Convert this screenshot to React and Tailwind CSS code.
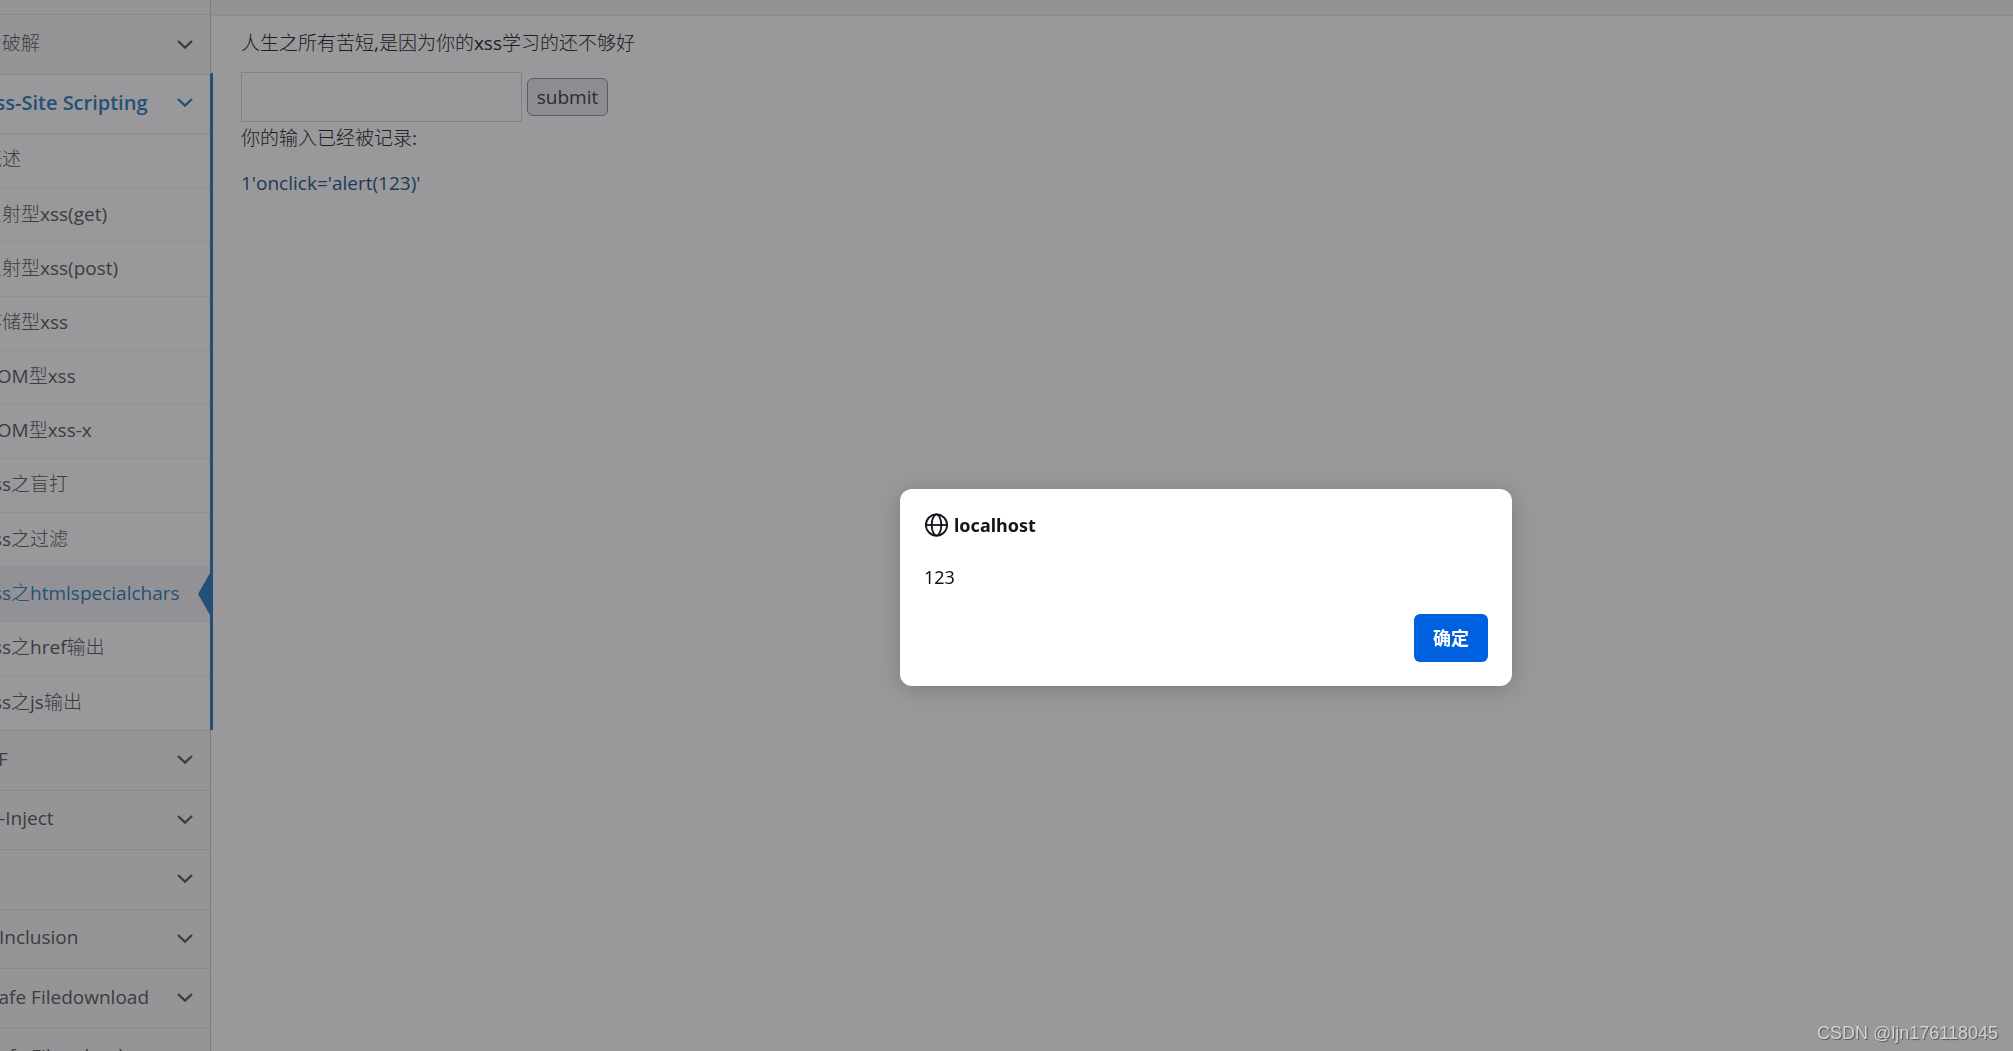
import { useState } from "react";

const xssItems = [
  "概述",
  "反射型xss(get)",
  "反射型xss(post)",
  "存储型xss",
  "DOM型xss",
  "DOM型xss-x",
  "xss之盲打",
  "xss之过滤",
  "xss之htmlspecialchars",
  "xss之href输出",
  "xss之js输出",
];

const lowerMenus = [
  "CSRF",
  "SQL-Inject",
  "RCE",
  "File Inclusion",
  "Unsafe Filedownload",
  "Unsafe Fileupload",
];

const Chevron = () => (
  <svg
    viewBox="0 0 16 10"
    className="w-4 h-[10px] shrink-0"
    fill="none"
    stroke="currentColor"
    strokeWidth="2.3"
  >
    <path d="M1 1 L8 7.6 L15 1" />
  </svg>
);

const MenuLink = ({ label }) => (
  <a
    href="#"
    className="flex h-full items-center justify-between pl-[39px] pr-[17px] text-[#585858]"
  >
    <span className="whitespace-nowrap pb-[3px]">{label}</span>
    <Chevron />
  </a>
);

const GlobeIcon = () => (
  <svg
    viewBox="0 0 24 24"
    className="w-6 h-6"
    fill="none"
    stroke="#15141a"
    strokeWidth="1.8"
  >
    <circle cx="12.5" cy="12" r="10.6" />
    <ellipse cx="12.5" cy="12" rx="4.8" ry="10.6" />
    <path d="M1.9 12 H23.1" />
  </svg>
);

const Sidebar = () => (
  <div className="w-[211px] shrink-0 overflow-x-clip">
    {/* the menu is scrolled sideways, its left part is out of view */}
    <nav className="-ml-[75px]">
      <ul>
        <li className="h-[15px] bg-[#f8f8f8] border-b border-r border-b-[#e5e5e5] border-r-[#cccccc]" />
        <li className="h-[59px] bg-[#f8f8f8] border-r border-[#cccccc]">
          <MenuLink label="暴力破解" />
        </li>
        <li className="bg-white border-r border-[#2b7dbc]">
          <a
            href="#"
            className="flex h-[60px] items-center justify-between border-y border-[#e5e5e5] pb-[2px] pl-[37px] pr-[17px] text-xl font-semibold text-[#2b7dbc]"
          >
            <span className="whitespace-nowrap">Cross-Site Scripting</span>
            <Chevron />
          </a>
          <ul className="grid h-[596px] auto-rows-fr">
            {xssItems.map((item) => {
              const active = item === "xss之htmlspecialchars";
              return (
                <li
                  key={item}
                  className="border-b border-dotted border-[#dcdcdc] last:border-b-0"
                >
                  <a
                    href="#"
                    className={
                      active
                        ? "flex h-full items-center justify-between bg-[#f3f3f6] pl-[58px] whitespace-nowrap text-[#2b7dbc]"
                        : "flex h-full items-center pl-[58px] whitespace-nowrap text-[#585858]"
                    }
                  >
                    <span className="pb-[2px]">{item}</span>
                    {active && (
                      <svg viewBox="0 0 12 42" className="w-3 h-[42px]">
                        <path d="M12 0 L0 21 L12 42 Z" fill="#2b7dbc" />
                      </svg>
                    )}
                  </a>
                </li>
              );
            })}
          </ul>
        </li>
      </ul>
      <ul className="grid h-[357px] auto-rows-fr">
        {lowerMenus.map((label) => (
          <li
            key={label}
            className="bg-[#f8f8f8] border-t border-r border-t-[#e5e5e5] border-r-[#cccccc]"
          >
            <MenuLink label={label} />
          </li>
        ))}
      </ul>
    </nav>
  </div>
);

const Content = () => {
  const [message, setMessage] = useState("");

  return (
    <main className="min-w-0 flex-1">
      <div className="h-4 bg-[#f5f5f5] border-b border-[#e5e5e5]" />
      <div className="flex">
        {/* open group marker */}
        <div className="mt-[57px] h-[657px] w-[2px] shrink-0 bg-[#2b7dbc]" />
        <div className="pl-7 pt-[11px] text-[#222222]">
          <p className="leading-8 mb-[13px]">
            人生之所有苦短,是因为你的xss学习的还不够好
          </p>
          <form
            className="flex items-center gap-[5px]"
            onSubmit={(e) => e.preventDefault()}
          >
            <input
              type="text"
              aria-label="message"
              className="w-[281px] h-[50px] border border-[#d5d5d5] bg-white px-2 focus:outline-none"
              value={message}
              onChange={(e) => setMessage(e.target.value)}
            />
            <button
              type="submit"
              className="h-[38px] w-[81px] rounded-md border border-[#8f8f9d] bg-[#e9e9ed] text-[#393939]"
            >
              submit
            </button>
          </form>
          <p className="leading-8 mb-[13px]">你的输入已经被记录:</p>
          <a href="#" className="block leading-8 text-[#225588]">
            1'onclick='alert(123)'
          </a>
        </div>
      </div>
    </main>
  );
};

const AlertDialog = () => (
  <div className="fixed inset-0 flex items-center justify-center bg-[#1c1b22]/45 pl-[399px] pt-[124px]">
    <div
      role="alertdialog"
      aria-labelledby="alert-title"
      className="w-[612px] rounded-xl bg-white p-6 text-[#15141a] shadow-[0_3px_24px_rgba(0,0,0,0.2)] font-['Noto_Sans','Noto_Sans_CJK_SC',sans-serif]"
    >
      <h2
        id="alert-title"
        className="flex items-center gap-[6px] text-lg leading-6 font-bold"
      >
        <GlobeIcon />
        localhost
      </h2>
      <p className="mt-7 text-lg leading-6">123</p>
      <div className="mt-[25px] flex justify-end">
        <button className="h-12 w-[74px] rounded-md bg-[#0061e0] text-lg font-bold text-white">
          确定
        </button>
      </div>
    </div>
  </div>
);

const App = () => {
  return (
    <div className="h-screen overflow-hidden bg-white text-[19px] font-['Open_Sans','Noto_Sans_CJK_SC_Light','Noto_Sans_CJK_SC',sans-serif]">
      <div className="flex">
        <Sidebar />
        <Content />
      </div>
      <AlertDialog />
      <div className="fixed right-[15px] bottom-[6px] text-lg leading-6 text-[#d2d2d4] [text-shadow:1px_1px_1px_#555] font-['Liberation_Sans',sans-serif]">
        CSDN @ljn176118045
      </div>
    </div>
  );
};

export default App;
